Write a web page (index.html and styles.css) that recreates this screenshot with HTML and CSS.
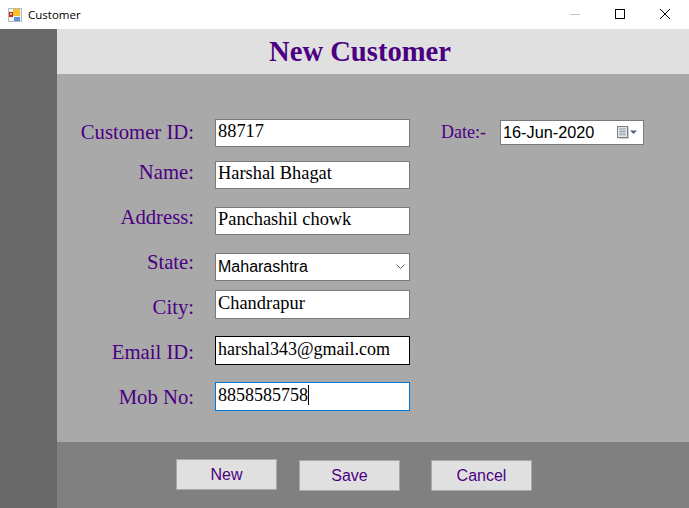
FILE: index.html
```html
<!DOCTYPE html>
<html lang="en">
<head>
<meta charset="utf-8">
<title>Customer</title>
<link rel="stylesheet" href="styles.css">
</head>
<body>
<div class="window">
  <header class="titlebar">
    <svg class="app-icon" width="14" height="14" viewBox="0 0 14 14">
      <rect x="0.5" y="0.5" width="13" height="13" fill="#f4f4f4" stroke="#b8b8b8"/>
      <rect x="1" y="4" width="4" height="5" fill="#b82a20"/>
      <rect x="5" y="1" width="7" height="7" fill="#f5c02c"/>
      <rect x="6" y="9" width="6" height="4" fill="#5c94e0"/>
      <rect x="2" y="5" width="2" height="2" fill="#f0c0a0"/>
    </svg>
    <span class="window-title">Customer</span>
    <div class="window-controls">
      <svg width="12" height="12" viewBox="0 0 12 12"><path d="M1 6.5H11" stroke="#c4c4c4" fill="none"/></svg>
      <svg width="12" height="12" viewBox="0 0 12 12"><rect x="1.5" y="1.5" width="9" height="9" stroke="#000" fill="none"/></svg>
      <svg width="12" height="12" viewBox="0 0 12 12"><path d="M1 1L11 11M11 1L1 11" stroke="#000" fill="none"/></svg>
    </div>
  </header>
  <div class="body">
    <aside class="sidebar"></aside>
    <div class="content">
      <h1 class="heading">New Customer</h1>
      <main class="form">
        <div class="row row-id">
          <label class="label label-id">Customer ID:</label>
          <div class="field">88717</div>
          <label class="date-label">Date:-</label>
          <div class="date-field">
            <span class="date-text">16-Jun-2020</span>
            <svg class="cal" width="20" height="13" viewBox="0 0 20 13">
              <rect x="0.5" y="0.5" width="10" height="11" fill="#dfe3ea" stroke="#7d7d7d"/>
              <path d="M2 3H9M2 5.5H9M2 8H9M4 2V10M7 2V10" stroke="#a4aab5" fill="none"/>
              <path d="M11.5 1V12.5H2" stroke="#d0d0d0" fill="none"/>
              <path d="M13 4.5H20L16.5 8Z" fill="#4d6185"/>
            </svg>
          </div>
        </div>
        <div class="row row-name">
          <label class="label label-name">Name:</label>
          <div class="field">Harshal Bhagat</div>
        </div>
        <div class="row row-address">
          <label class="label label-address">Address:</label>
          <div class="field">Panchashil chowk</div>
        </div>
        <div class="row row-state">
          <label class="label label-state">State:</label>
          <div class="field select">
            <span>Maharashtra</span>
            <svg width="9" height="6" viewBox="0 0 9 6"><path d="M0.5 0.5L4.5 4.5L8.5 0.5" stroke="#606060" fill="none"/></svg>
          </div>
        </div>
        <div class="row row-city">
          <label class="label label-city">City:</label>
          <div class="field">Chandrapur</div>
        </div>
        <div class="row row-email">
          <label class="label label-email">Email ID:</label>
          <div class="field field-hover">harshal343@gmail.com</div>
        </div>
        <div class="row row-mob">
          <label class="label label-mob">Mob No:</label>
          <div class="field field-focus">8858585758<span class="caret"></span></div>
        </div>
      </main>
      <footer class="footer">
        <button class="btn btn-new">New</button>
        <button class="btn btn-save">Save</button>
        <button class="btn btn-cancel">Cancel</button>
      </footer>
    </div>
  </div>
</div>
</body>
</html>
```
FILE: styles.css
```css
* { box-sizing: border-box; }
html, body { margin: 0; padding: 0; }
body { width: 689px; height: 508px; overflow: hidden; background: #fff; }
.window { width: 689px; height: 508px; display: flex; flex-direction: column; }

.titlebar { height: 29px; flex: none; display: flex; align-items: center; background: #fff; padding-left: 8px; }
.app-icon { flex: none; margin-right: 6px; }
.window-title { font: 11.5px "Open Sans", "Liberation Sans", sans-serif; color: #000; }
.window-controls { margin-left: auto; display: flex; gap: 33px; padding-right: 18px; margin-top: -2px; }
.window-controls svg { display: block; }

.body { flex: 1; display: flex; min-height: 0; }
.sidebar { width: 57px; flex: none; background: #696969; }
.content { flex: 1; display: flex; flex-direction: column; min-width: 0; }

.heading { margin: 0; height: 45px; flex: none; background: #e0e0e0; color: #4b0082; text-align: center; font: bold 28.6px/45px "Liberation Serif", serif; padding-right: 26px; }

.form { flex: 1; background: #a9a9a9; padding-top: 45px; }
.row { display: flex; align-items: flex-start; height: 28px; }
.row-name { margin-top: 14px; }
.row-address { margin-top: 18px; }
.row-state { margin-top: 18px; }
.row-city { margin-top: 9px; height: 29px; }
.row-email { margin-top: 17px; height: 29px; }
.row-mob { margin-top: 17px; height: 29px; }

.label { width: 137px; margin-right: 21px; flex: none; text-align: right; color: #4b0082; font: 20.7px/23px "Liberation Serif", serif; }
.label-id { padding-top: 2px; }
.label-name { margin-top: 0; }
.label-address { margin-top: -1px; }
.label-state { margin-top: -2px; }
.label-city { padding-top: 6px; }
.label-email { padding-top: 5px; }
.label-mob { padding-top: 4px; }

.field { width: 195px; height: 100%; flex: none; background: #fff; border: 1px solid #7a7a7a; color: #000; font: 18.4px/23px "Liberation Serif", serif; padding-left: 2px; white-space: nowrap; }
.row-city .field { padding-top: 1px; }
.row-email .field, .row-mob .field { padding-top: 1px; font-size: 18px; }
.field-hover { border-color: #000; }
.field-focus { border-color: #0078d7; }
.caret { display: inline-block; width: 1px; height: 20px; background: #000; vertical-align: -4px; }
.select { display: flex; align-items: center; justify-content: space-between; font: 16px "Liberation Sans", sans-serif; padding-right: 4px; }

.date-label { margin-left: 31px; flex: none; width: 59px; color: #4b0082; font: 18px/23px "Liberation Serif", serif; padding-top: 2px; }
.date-field { width: 144px; height: 25px; flex: none; margin-top: 1px; background: #fff; border: 1px solid #7a7a7a; display: flex; align-items: center; justify-content: space-between; padding: 0 6px 0 2px; color: #000; font: 16.3px "Liberation Sans", sans-serif; }

.footer { height: 66px; flex: none; background: #808080; display: flex; align-items: flex-start; padding: 17px 0 0 119px; }
.btn { width: 101px; height: 31px; background: #e0e0e0; border: 1px solid #a9a9a9; color: #4b0082; font: 16px "Liberation Sans", sans-serif; padding: 0; }
.btn-save { margin: 1px 0 0 22px; }
.btn-cancel { margin: 1px 0 0 31px; }
```
